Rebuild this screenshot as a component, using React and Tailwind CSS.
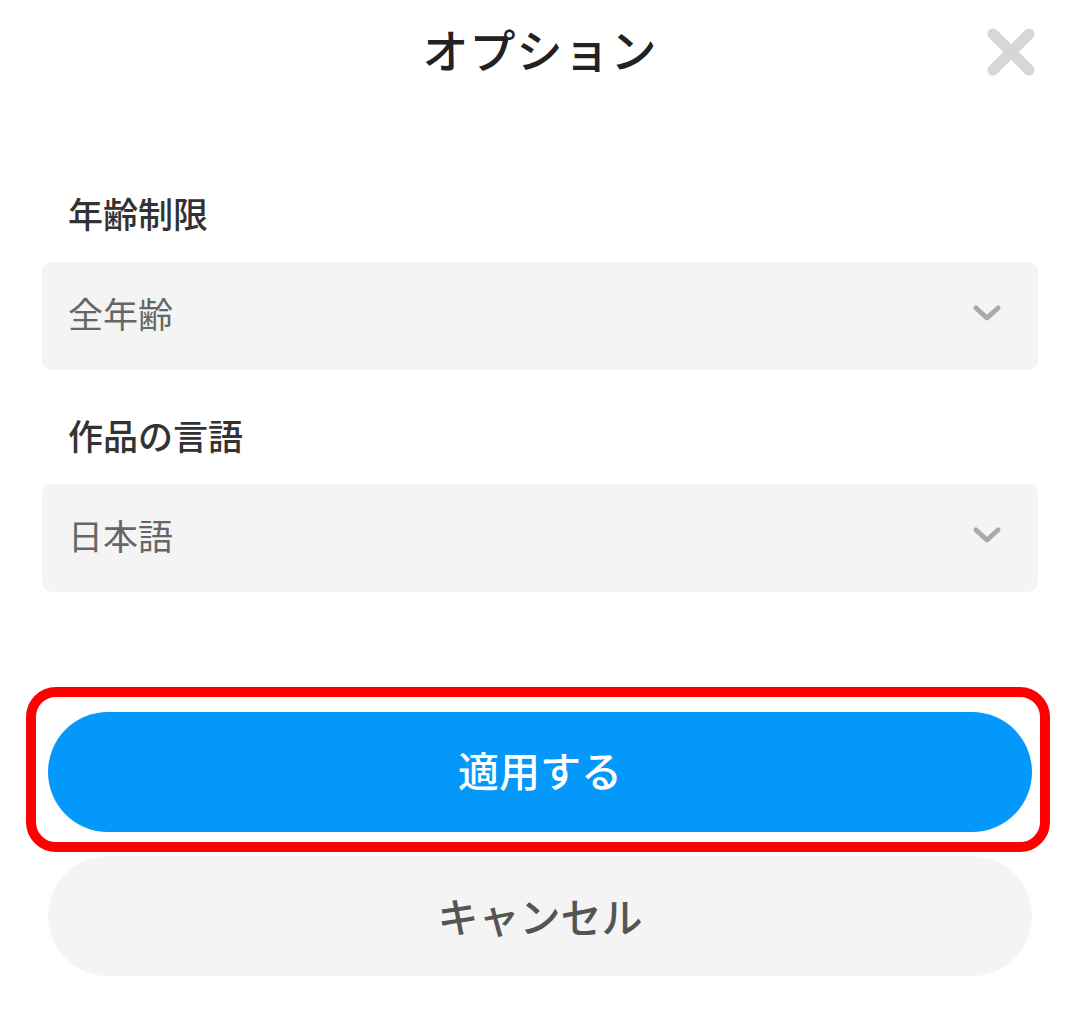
import React from "react";

const font = { fontFamily: '"Noto Sans CJK JP", "Noto Sans", sans-serif' };

function Chevron() {
  return (
    <svg width="30" height="20" viewBox="0 0 30 20" className="shrink-0 -mt-[6px]">
      <path d="M4 5 L15 15 L26 5" fill="none" stroke="#aaaaaa" strokeWidth="5" strokeLinecap="round" strokeLinejoin="round" />
    </svg>
  );
}

function SelectBox({ value }) {
  return (
    <div className="h-[108px] rounded-[10px] bg-[#f4f4f4] flex items-center justify-between pl-[26px] pr-[36px]">
      <span className="text-[35px] leading-none text-[#666666] -mt-[8px]">{value}</span>
      <Chevron />
    </div>
  );
}

export default function App() {
  return (
    <div className="w-[1080px] h-[1032px] bg-white flex flex-col" style={font}>
      <div className="relative h-[100px] flex items-center justify-center">
        <h1 className="text-[46px] font-medium leading-none text-[#222222] tracking-[1px] -mt-[4px]">オプション</h1>
        <button className="absolute left-[987px] top-[28px] w-[48px] h-[48px]">
          <svg width="48" height="48" viewBox="0 0 48 48">
            <path d="M6 6 L42 42 M42 6 L6 42" stroke="#d6d6d6" strokeWidth="11" strokeLinecap="round" />
          </svg>
        </button>
      </div>

      <div className="px-[42px] flex flex-col">
        <div className="mt-[89px] h-[48px] flex items-center pl-[26px] text-[35px] font-medium text-[#333333]">年齢制限</div>
        <div className="mt-[25px]">
          <SelectBox value="全年齢" />
        </div>
        <div className="mt-[41px] h-[48px] flex items-center pl-[26px] text-[35px] font-medium text-[#333333]">作品の言語</div>
        <div className="mt-[25px]">
          <SelectBox value="日本語" />
        </div>
      </div>

      <div className="mt-[95px] ml-[26px] mr-[30px] border-[10px] border-[#ff0000] rounded-[30px] pt-[15px] pb-[10px] pl-[12px] pr-[8px]">
        <button className="w-full h-[120px] rounded-full bg-[#0398fa] text-white text-[41px] font-medium flex items-center justify-center">
          <span className="-mt-[4px]">適用する</span>
        </button>
      </div>

      <div className="mt-[4px] mx-[48px]">
        <button className="w-full h-[120px] rounded-full bg-[#f4f4f4] text-[#555555] text-[41px] font-medium flex items-center justify-center">
          キャンセル
        </button>
      </div>
    </div>
  );
}
